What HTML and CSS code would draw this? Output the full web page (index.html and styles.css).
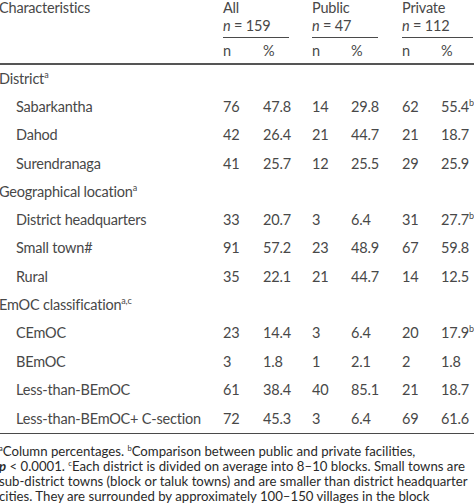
FILE: index.html
```html
<!DOCTYPE html>
<html>
<head>
<meta charset="utf-8">
<link rel="stylesheet" href="styles.css">
</head>
<body>
<table class="tbl">
  <colgroup>
    <col class="c-label"><col class="c-n1"><col class="c-p1"><col class="c-n2"><col class="c-p2"><col class="c-n3"><col class="c-p3">
  </colgroup>
  <thead>
    <tr class="h1">
      <th class="label">Characteristics</th>
      <th colspan="2">All</th>
      <th colspan="2">Public</th>
      <th colspan="2">Private</th>
    </tr>
    <tr class="h2">
      <th></th>
      <th colspan="2"><div class="grp g1"><i>n</i> = 159</div></th>
      <th colspan="2"><div class="grp g2"><i>n</i> = 47</div></th>
      <th colspan="2"><div class="grp g3"><i>n</i> = 112</div></th>
    </tr>
    <tr class="h3">
      <th></th>
      <th>n</th><th>%</th>
      <th>n</th><th>%</th>
      <th>n</th><th>%</th>
    </tr>
  </thead>
  <tbody>
    <tr><td class="cat">District<sup>a</sup></td><td></td><td></td><td></td><td></td><td></td><td></td></tr>
    <tr><td class="sub">Sabarkantha</td><td>76</td><td>47.8</td><td>14</td><td>29.8</td><td>62</td><td class="last">55.4<sup>b</sup></td></tr>
    <tr><td class="sub">Dahod</td><td>42</td><td>26.4</td><td>21</td><td>44.7</td><td>21</td><td class="last">18.7</td></tr>
    <tr><td class="sub">Surendranaga</td><td>41</td><td>25.7</td><td>12</td><td>25.5</td><td>29</td><td class="last">25.9</td></tr>
    <tr><td class="cat">Geographical location<sup>a</sup></td><td></td><td></td><td></td><td></td><td></td><td></td></tr>
    <tr><td class="sub">District headquarters</td><td>33</td><td>20.7</td><td>3</td><td>6.4</td><td>31</td><td class="last">27.7<sup>b</sup></td></tr>
    <tr><td class="sub">Small town#</td><td>91</td><td>57.2</td><td>23</td><td>48.9</td><td>67</td><td class="last">59.8</td></tr>
    <tr><td class="sub">Rural</td><td>35</td><td>22.1</td><td>21</td><td>44.7</td><td>14</td><td class="last">12.5</td></tr>
    <tr><td class="cat">EmOC classification<sup>a,c</sup></td><td></td><td></td><td></td><td></td><td></td><td></td></tr>
    <tr><td class="sub">CEmOC</td><td>23</td><td>14.4</td><td>3</td><td>6.4</td><td>20</td><td class="last">17.9<sup>b</sup></td></tr>
    <tr><td class="sub">BEmOC</td><td>3</td><td>1.8</td><td>1</td><td>2.1</td><td>2</td><td class="last">1.8</td></tr>
    <tr><td class="sub">Less-than-BEmOC</td><td>61</td><td>38.4</td><td>40</td><td>85.1</td><td>21</td><td class="last">18.7</td></tr>
    <tr class="lastrow"><td class="sub">Less-than-BEmOC+ C-section</td><td>72</td><td>45.3</td><td>3</td><td>6.4</td><td>69</td><td class="last">61.6</td></tr>
  </tbody>
</table>
<p class="notes"><sup>a</sup>Column percentages. <sup>b</sup>Comparison between public and private facilities,<br><b><i>p</i></b> &lt; 0.0001. <sup>c</sup>Each district is divided on average into 8–10 blocks. Small towns are<br>sub-district towns (block or taluk towns) and are smaller than district headquarter<br>cities. They are surrounded by approximately 100–150 villages in the block</p>
</body>
</html>
```

FILE: styles.css
```css
html, body {
  margin: 0;
  padding: 0;
  background: #ffffff;
  overflow: hidden;
}
body {
  width: 474px;
  height: 504px;
  font-family: Lato, "Open Sans", sans-serif;
  color: #484848;
}
.tbl {
  border-collapse: collapse;
  table-layout: fixed;
  width: 476px;
  margin: -3px 0 0 -1px;
  font-size: 14.5px;
  letter-spacing: -0.2px;
}
.c-label { width: 224px; }
.c-n1 { width: 40px; }
.c-p1 { width: 49px; }
.c-n2 { width: 39px; }
.c-p2 { width: 51px; }
.c-n3 { width: 39px; }
.c-p3 { width: 34px; }
th, td {
  padding: 0;
  text-align: left;
  font-weight: normal;
  white-space: nowrap;
  vertical-align: middle;
}
.h1 { height: 20px; }
.h2 { height: 21px; }
.h2 th { vertical-align: bottom; }
.grp {
  border-bottom: 1px solid #4a4a4a;
  height: 20px;
  line-height: 18px;
}
.g1 { margin-right: 23px; }
.g2 { margin-right: 24px; }
.g3 { margin-right: 2px; }
.h3 { height: 26px; }
.h3 th { border-bottom: 2px solid #555555; }
tbody tr { height: 28.3px; }
.lastrow { height: 30.3px; }
.lastrow td {
  border-bottom: 1px solid #4a4a4a;
  vertical-align: top;
  padding-top: 6px;
}
.sub { padding-left: 17px; }
.last { overflow: visible; }
sup {
  font-size: 9px;
  line-height: 1;
  vertical-align: 6px;
}
.notes {
  margin: 10px 0 0 -1px;
  font-size: 13.2px;
  line-height: 15px;
  width: 476px;
  white-space: nowrap;
  color: #2a2a2a;
}
.notes sup { font-size: 7.5px; vertical-align: 5px; }
```
